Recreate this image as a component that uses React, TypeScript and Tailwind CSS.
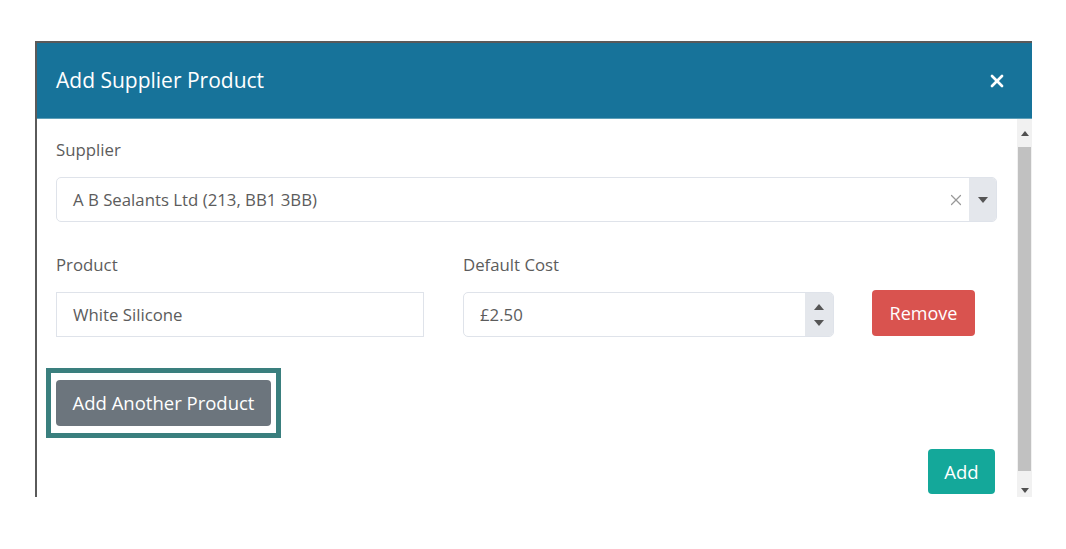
import { X } from 'lucide-react';

const font = { fontFamily: '"Open Sans", "Noto Sans", sans-serif' };

function Caret({ up, className }: { up?: boolean; className?: string }) {
  return (
    <svg width="10" height="6" viewBox="0 0 10 6" className={className}>
      {up ? <path d="M0 6 L5 0 L10 6 Z" fill="currentColor" /> : <path d="M0 0 L10 0 L5 6 Z" fill="currentColor" />}
    </svg>
  );
}

export default function App() {
  return (
    <div className="min-h-screen w-[1066px] h-[549px] bg-white pl-[35px] pt-[41px]" style={font}>
      <div className="w-[997px] h-[456px] border-t-2 border-l-2 border-[#5a5a5a] flex flex-col overflow-hidden">
        {/* header */}
        <div className="h-[76px] bg-[#17739a] flex items-center justify-between pl-[19px] pr-[25px] border-b border-[#5e9fb8]">
          <h2 className="text-[21px] text-white">Add Supplier Product</h2>
          <X className="text-white" size={20} strokeWidth={3.2} />
        </div>

        {/* body */}
        <div className="flex flex-1 min-h-0">
          <div className="flex-1 pl-[19px] pr-[20px] pt-[19px] text-[#5c5c5c]">
            <label className="block text-[16.8px] leading-6">Supplier</label>
            <div className="mt-[15px] h-[45px] flex border border-[#dfe3ea] rounded-[5px] overflow-hidden">
              <div className="flex-1 flex items-center pl-4 text-[16.8px]">A B Sealants Ltd (213, BB1 3BB)</div>
              <div className="flex items-center pr-[4px]">
                <X size={18} strokeWidth={1.6} className="text-[#999]" />
              </div>
              <div className="w-[27px] bg-[#e4e7ec] flex items-center justify-center">
                <Caret className="text-[#555]" />
              </div>
            </div>

            <div className="mt-[31px] flex items-start">
              <div className="w-[368px]">
                <label className="block text-[16.8px] leading-6">Product</label>
                <div className="mt-[15px] h-[45px] border border-[#dfe3ea] flex items-center pl-4 text-[16.8px]">White Silicone</div>
              </div>
              <div className="w-[371px] ml-[39px]">
                <label className="block text-[16.8px] leading-6">Default Cost</label>
                <div className="mt-[15px] h-[45px] border border-[#dfe3ea] rounded-[5px] overflow-hidden flex">
                  <div className="flex-1 flex items-center pl-4 text-[16.8px]">£2.50</div>
                  <div className="w-[28px] bg-[#e4e7ec] flex flex-col items-center justify-center gap-[10px]">
                    <Caret up className="text-[#555]" />
                    <Caret className="text-[#555]" />
                  </div>
                </div>
              </div>
              <button className="ml-[38px] mt-[37px] w-[103px] h-[46px] bg-[#d9534f] text-white text-[18px] rounded-[4px]">Remove</button>
            </div>

            <div className="mt-[31px] -ml-[10px] inline-block border-[5px] border-[#3a7f7e] pt-[7px] pb-[7px] pl-[5px] pr-[5px]">
              <button className="w-[215px] h-[46px] bg-[#6c757d] text-white text-[18.5px] rounded-[4px]">Add Another Product</button>
            </div>

            <div className="mt-[11px] flex justify-end pr-[2px]">
              <button className="w-[67px] h-[45px] bg-[#14a89a] text-white text-[18.5px] rounded-[4px]">Add</button>
            </div>
          </div>

          {/* scrollbar */}
          <div className="w-[15px] bg-[#f1f1f1] flex flex-col items-center">
            <div className="h-[28px] flex items-center justify-center">
              <Caret up className="text-[#505050] w-[8px] h-[5px]" />
            </div>
            <div className="w-[13px] h-[324px] bg-[#c1c1c1]" />
            <div className="flex-1 flex items-end justify-center pb-[4px]">
              <Caret className="text-[#505050] w-[8px] h-[5px]" />
            </div>
          </div>
        </div>
      </div>
    </div>
  );
}
